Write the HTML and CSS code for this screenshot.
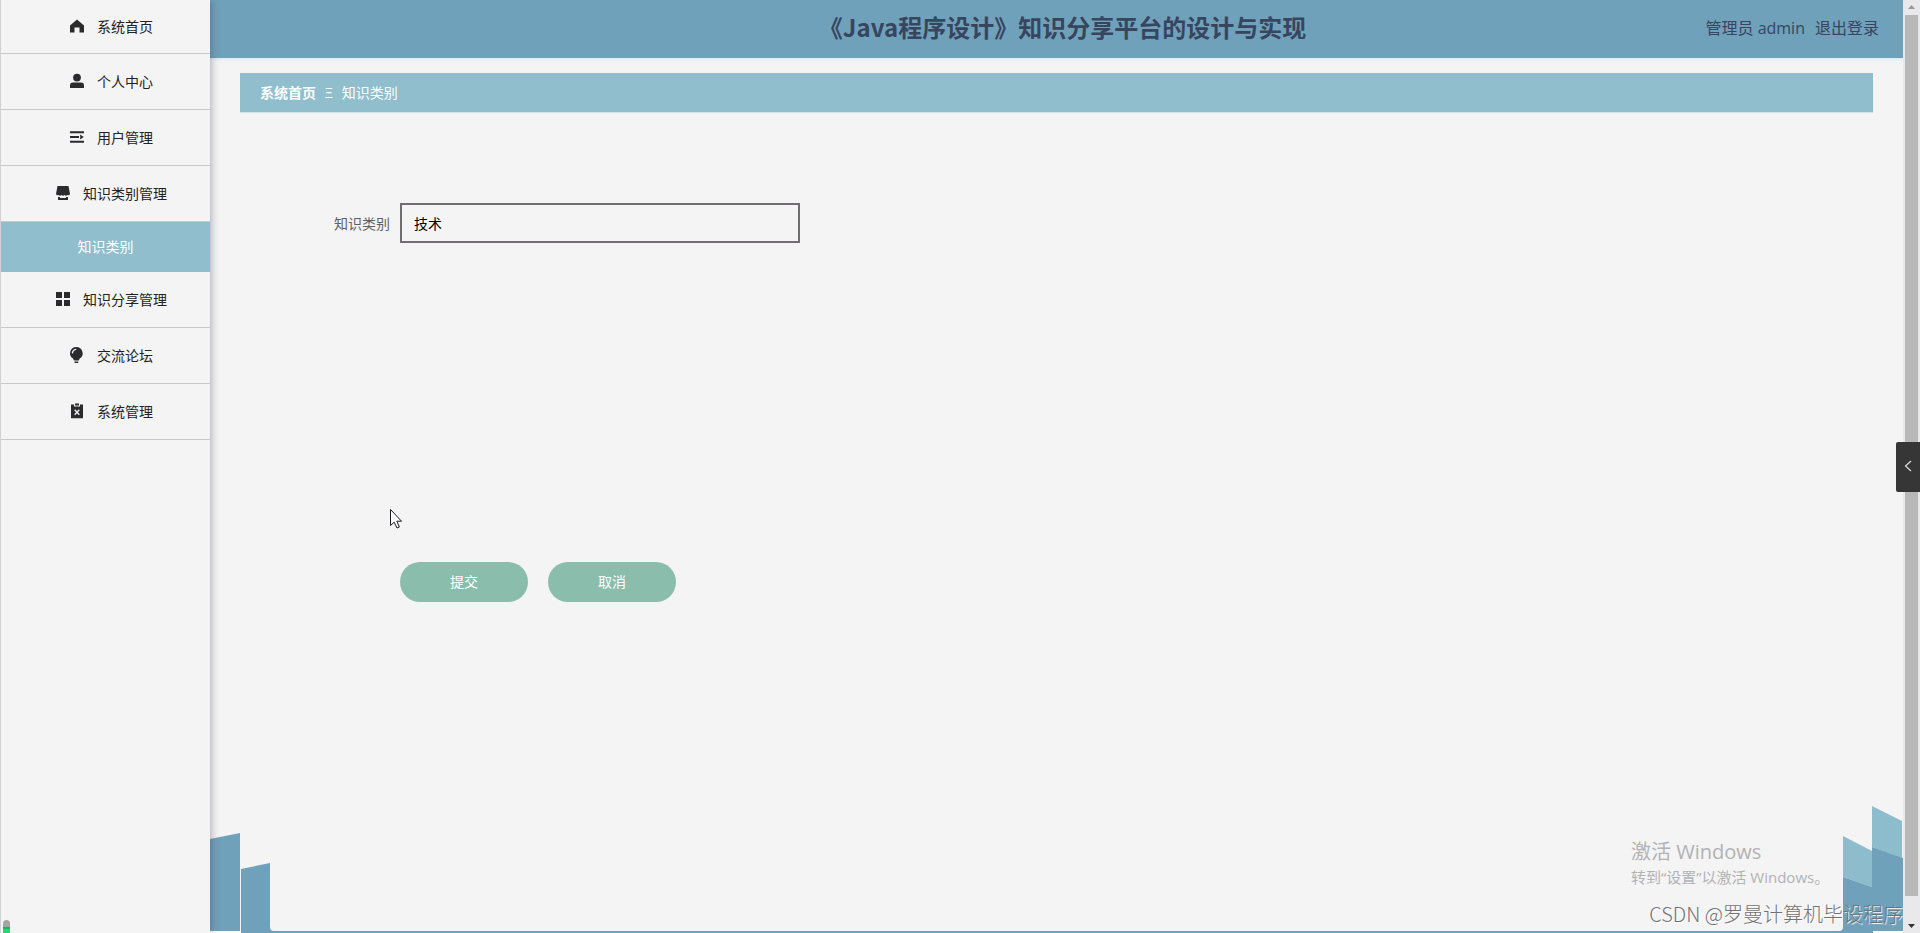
FILE: index.html
```html
<!DOCTYPE html>
<html lang="zh-CN">
<head>
    <meta charset="UTF-8">
    <meta name="viewport" content="width=device-width, initial-scale=1.0">
    <title>《Java程序设计》知识分享平台的设计与实现</title>
    <link rel="stylesheet" href="styles.css">
</head>
<body>
    <nav class="sidebar">
        <ul class="menu">
            <li>
                <a href="#">
                    <svg class="icon" viewBox="0 0 14 14"><path d="M7 0.5 L14 6.5 V13.5 H9.5 V8.5 H4.5 V13.5 H0 V6.5 Z"/></svg>
                    <span>系统首页</span>
                </a>
            </li>
            <li>
                <a href="#">
                    <svg class="icon" viewBox="0 0 14 14"><circle cx="7" cy="3.6" r="3.9"/><path d="M0 14 V11.5 Q0 8.6 3 8.6 H11 Q14 8.6 14 11.5 V14 Z"/></svg>
                    <span>个人中心</span>
                </a>
            </li>
            <li>
                <a href="#">
                    <svg class="icon" viewBox="0 0 14 14"><path d="M0 1.2 H14 V3.2 H0 Z M0 6 H9 V8 H0 Z M0 10.8 H14 V12.8 H0 Z M10.2 4.4 L13.8 7 L10.2 9.6 Z"/></svg>
                    <span>用户管理</span>
                </a>
            </li>
            <li>
                <a href="#">
                    <svg class="icon" viewBox="0 0 14 14"><path d="M1.5 0 H12.5 L14 8 Q13 10 11.5 9 Q10 10.4 8.5 9 Q7 10.4 5.5 9 Q4 10.4 2.5 9 Q1 10 0 8 Z M2 11 H4 V12 H10 V11 H12 V14 H2 Z"/></svg>
                    <span>知识类别管理</span>
                </a>
                <ul class="submenu">
                    <li><a href="#" class="active">知识类别</a></li>
                </ul>
            </li>
            <li>
                <a href="#">
                    <svg class="icon" viewBox="0 0 14 14"><path d="M0 0 H6 V6 H0 Z M8 0 H14 V6 H8 Z M0 8 H6 V14 H0 Z M8 8 H14 V14 H8 Z"/></svg>
                    <span>知识分享管理</span>
                </a>
            </li>
            <li>
                <a href="#">
                    <svg class="icon" viewBox="0 0 14 14"><path d="M6.3 -1 A6.3 6.3 0 0 0 3 10.6 L4 12.6 H8.8 L9.7 10.6 A6.3 6.3 0 0 0 6.3 -1 Z M4.6 13.4 H8.2 V15 H4.6 Z"/><path class="shine" d="M2.4 5.4 Q2.6 1.9 6.2 1.4"/></svg>
                    <span>交流论坛</span>
                </a>
            </li>
            <li>
                <a href="#">
                    <svg class="icon" viewBox="0 0 14 14"><path d="M1 0.6 H4 V2.6 H10 V0.6 H13 V14.3 H1 Z M5 -0.4 H9 V1.4 H5 Z"/><path class="cross" d="M4.7 5.8 L9.3 10.8 M9.3 5.8 L4.7 10.8"/></svg>
                    <span>系统管理</span>
                </a>
            </li>
        </ul>
    </nav>

    <div class="page">
        <header class="header">
            <h1>《Java程序设计》知识分享平台的设计与实现</h1>
            <div class="user">
                <span>管理员 admin</span>
                <a href="#">退出登录</a>
            </div>
        </header>

        <main class="content">
            <div class="breadcrumb">
                <a href="#">系统首页</a>
                <span class="separator">Ξ</span>
                <span>知识类别</span>
            </div>
            <form class="edit-form">
                <div class="form-group">
                    <label for="category">知识类别</label>
                    <input type="text" id="category" name="category" value="技术">
                </div>
                <div class="actions">
                    <button type="submit">提交</button>
                    <button type="button">取消</button>
                </div>
            </form>
        </main>

        <!-- corner decorations -->
        <div class="ground"></div>
        <svg class="corner corner-left" viewBox="0 0 68 100">
            <path class="white" d="M0 98 H31 V100 H0 Z"/>
            <path class="dark" d="M0 6 L30 0 V98 H0 Z M31 36 L60 30 V94 Q60 98 64 98 H68 V100 H31 Z"/>
        </svg>
        <svg class="corner corner-right" viewBox="0 0 68 128">
            <path class="white" d="M38 126 H68 V128 H38 Z"/>
            <path class="light" d="M37 1 L67 16 V53 L37 42 Z M8 31 L37 46 V82 L8 72 Z"/>
            <path class="dark" d="M37 42 L68 53 V126 H38 V128 H0 V126 H4 Q8 126 8 122 V72 L37 82 Z"/>
        </svg>
        <div class="activate">
            <p class="activate-title">激活 Windows</p>
            <p>转到“设置”以激活 Windows。</p>
        </div>
        <p class="credit">CSDN @罗曼计算机毕设程序</p>
    </div>

    <div class="scrollbar">
        <svg viewBox="0 0 17 15"><path class="arrow-up" d="M5 9 L8.5 5 L12 9 Z"/></svg>
        <div class="thumb"></div>
        <svg viewBox="0 0 17 15"><path class="arrow-down" d="M5 6 H12 L8.5 10 Z"/></svg>
    </div>

    <button class="drawer" aria-label="展开">
        <svg viewBox="0 0 8 12"><path d="M7 1 L1.5 6 L7 11"/></svg>
    </button>
    <div class="level"></div>
    <svg class="pointer" viewBox="0 0 13 20"><path d="M0.5 0.5 V16.5 L4.2 13.2 L7 19 L9.4 18 L6.8 12.2 H11.5 Z"/></svg>
</body>
</html>
```
FILE: styles.css
```css
* {
    margin: 0;
    padding: 0;
    box-sizing: border-box;
}

body {
    display: flex;
    min-height: 100vh;
    background: #f4f4f4;
    color: #333;
    font-family: "Open Sans", "Noto Sans CJK SC", sans-serif;
    font-size: 14px;
    overflow: hidden;
}

a {
    color: inherit;
    text-decoration: none;
}

ul {
    list-style: none;
}

/* sidebar */
.sidebar {
    position: relative;
    z-index: 1;
    flex: 0 0 210px;
    background: #f4f4f4;
    border-left: 1px solid #d2d2d4;
    box-shadow: 1px 0 8px rgba(60, 50, 80, 0.4);
}

.menu > li > a {
    display: flex;
    align-items: center;
    justify-content: center;
    gap: 13px;
    height: 56px;
    padding: 0 0 1px 12px;
    border-bottom: 1px solid #c8c9cb;
    color: #222;
}

.menu > li:first-child > a {
    height: 54px;
}

.icon {
    width: 14px;
    height: 14px;
    fill: #2b2b2d;
    overflow: visible;
}

.icon .shine,
.icon .cross {
    fill: none;
    stroke: #f4f4f4;
    stroke-width: 1.3;
}

.submenu a {
    display: block;
    line-height: 50px;
    text-align: center;
    background: #90becd;
    color: #fff;
}

/* header */
.page {
    position: relative;
    flex: 1;
    min-width: 0;
}

.header {
    display: grid;
    grid-template-columns: 1fr auto 1fr;
    align-items: center;
    height: 58px;
    padding: 0 24px 4px 36px;
    background: #6fa1bb;
    box-shadow: 0 2px 2px #dcebf2;
    color: #38455f;
}

.header h1 {
    grid-column: 2;
    font-family: "Noto Sans CJK SC", sans-serif;
    font-size: 24px;
    font-weight: 700;
    line-height: 36px;
}

.user {
    display: flex;
    justify-content: flex-end;
    gap: 10px;
    font-size: 16px;
}

/* content */
.content {
    padding: 15px 30px;
}

.breadcrumb {
    display: flex;
    align-items: center;
    gap: 9px;
    height: 40px;
    padding: 0 20px 1px;
    background: #90becd;
    border-bottom: 1px solid #d0e4eb;
    color: #fff;
}

.breadcrumb a {
    font-weight: 700;
}

.edit-form {
    padding: 90px 80px;
}

.form-group {
    display: flex;
    align-items: center;
}

.form-group label {
    width: 80px;
    padding-right: 10px;
    text-align: right;
    color: #606063;
}

.form-group input {
    width: 400px;
    height: 40px;
    padding: 0 12px;
    border: 2px solid #706e70;
    background: transparent;
    color: #000;
    font: inherit;
    outline: none;
}

.actions {
    display: flex;
    gap: 20px;
    margin-top: 319px;
    padding-left: 80px;
}

.actions button {
    width: 128px;
    height: 40px;
    padding-bottom: 2px;
    border: none;
    border-radius: 20px;
    background: #8abdac;
    color: #fff;
    font: inherit;
    cursor: pointer;
}

/* corner decorations */
.ground {
    position: absolute;
    right: 60px;
    bottom: 0;
    left: 60px;
    height: 2px;
    background: #6fa1bb;
}

.corner {
    position: absolute;
    bottom: 0;
    width: 68px;
}

.corner-left {
    left: 0;
}

.corner-right {
    right: 0;
}

.white {
    fill: #fff;
}

.light {
    fill: #8dbdcc;
}

.dark {
    fill: #6fa1bb;
}

.activate {
    position: absolute;
    right: 72px;
    bottom: 45px;
    width: 200px;
    color: #b2b2b5;
    font-size: 15px;
    line-height: 22px;
    white-space: nowrap;
}

.activate-title {
    font-size: 20px;
    line-height: 28px;
}

.credit {
    position: absolute;
    right: 0;
    bottom: 4px;
    color: #727274;
    font-family: "Noto Sans CJK SC", sans-serif;
    font-size: 20px;
    font-weight: 300;
    line-height: 30px;
    text-shadow: 1px 1px 1px #fff;
}

/* scrollbar */
.scrollbar {
    display: flex;
    flex-direction: column;
    flex: 0 0 17px;
    height: 100vh;
    background: #e9e8eb;
}

.scrollbar svg {
    width: 17px;
    height: 15px;
}

.thumb {
    flex: 1;
    margin: 0 2px 22px;
    background: #b8b8b9;
}

.arrow-up {
    fill: #98979a;
}

.arrow-down {
    fill: #333;
}

.drawer {
    position: absolute;
    z-index: 2;
    top: 442px;
    right: 0;
    width: 24px;
    height: 50px;
    border: none;
    border-radius: 2px 0 0 2px;
    background: #363636;
}

.drawer svg {
    width: 8px;
    height: 12px;
    fill: none;
    stroke: #ddd;
    stroke-width: 1.2;
}

.level {
    position: absolute;
    z-index: 2;
    bottom: 0;
    left: 3px;
    width: 7px;
    height: 13px;
    border-radius: 4px 4px 0 0;
    background: linear-gradient(#a5a5a5 7px, #15b85c 7px, #15b85c 9px, #20d878 9px);
}

.pointer {
    position: absolute;
    z-index: 2;
    top: 509px;
    left: 390px;
    width: 13px;
    height: 20px;
    fill: #fff;
    stroke: #1a1a22;
}
```
